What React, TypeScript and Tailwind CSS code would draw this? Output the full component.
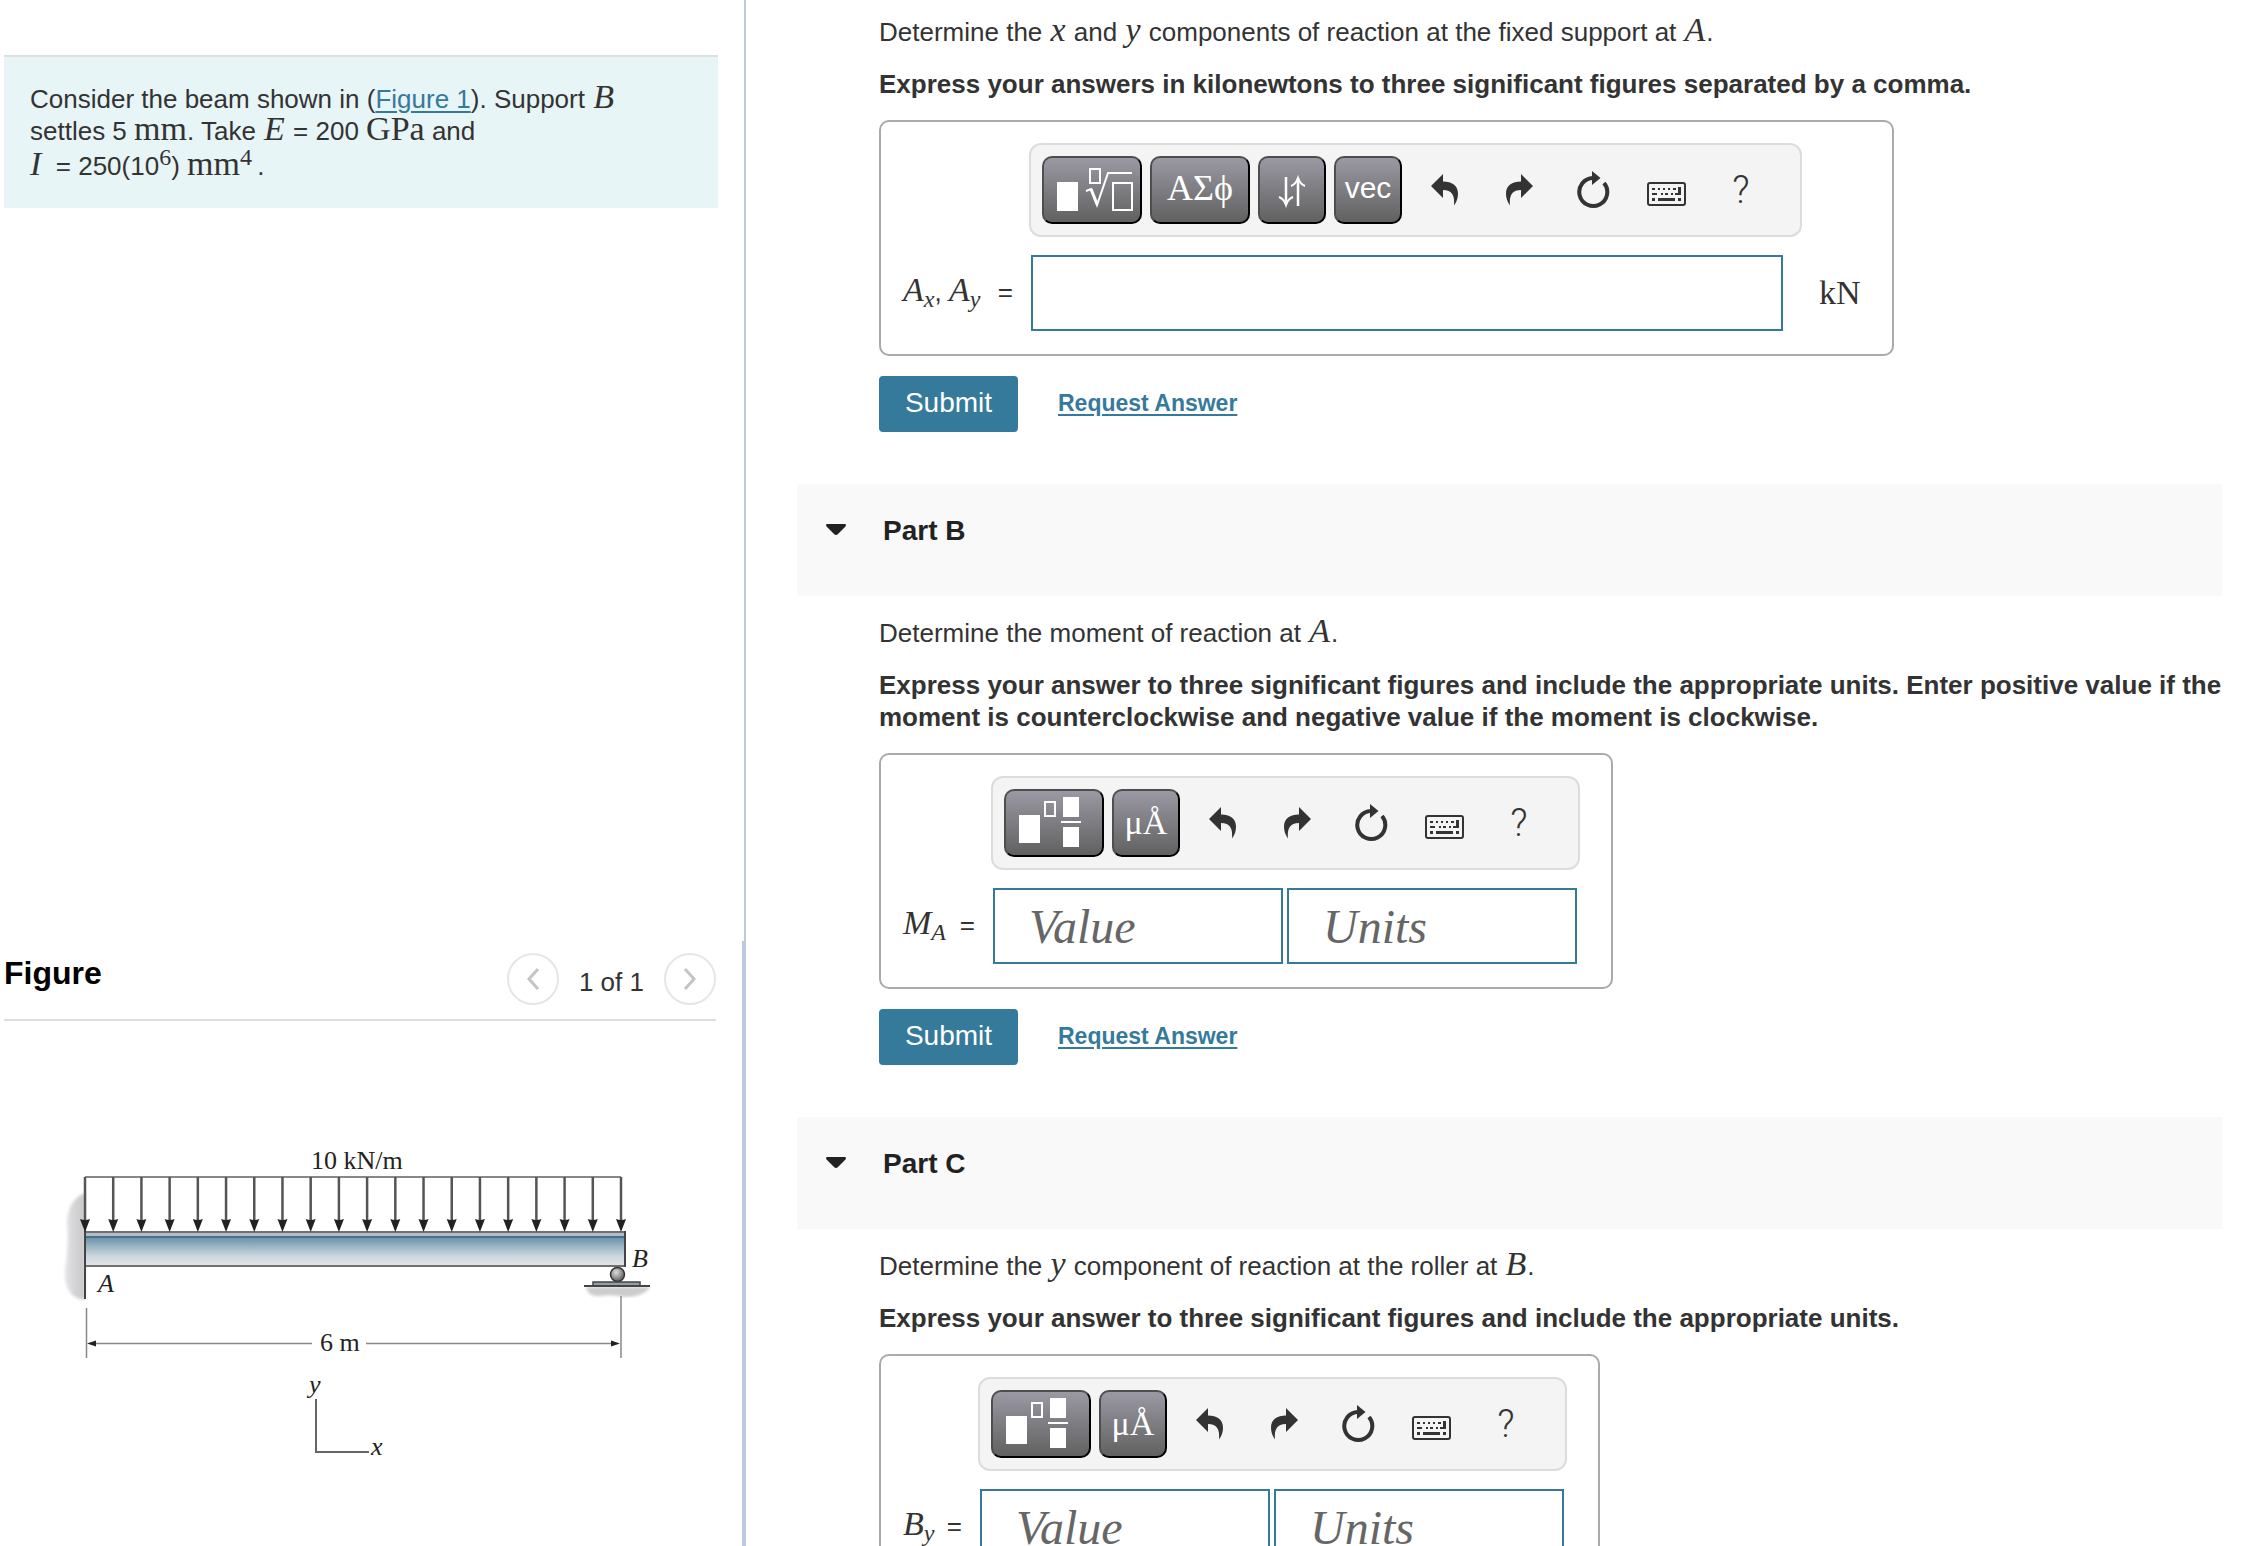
import React from "react";

const MATH = "font-['Liberation_Serif',serif] text-[34px] leading-[0px]";

const V = ({ children }: { children: React.ReactNode }) => (
  <i className={`${MATH} mx-[1px]`}>{children}</i>
);

const Sub = ({ children }: { children: React.ReactNode }) => (
  <sub className="text-[24px] bottom-[-6px]">{children}</sub>
);

const Sup = ({ children }: { children: React.ReactNode }) => (
  <sup className="top-[-10px] align-baseline font-['Liberation_Serif',serif] text-[24px]">{children}</sup>
);

const TemplateRootIcon = () => (
  <svg width="96" height="64" viewBox="2 2 96 64" fill="none" stroke="#fff" strokeWidth="2">
    <rect x="15" y="26" width="21" height="29" fill="#fff" stroke="none" />
    <rect x="48" y="13" width="10" height="14" />
    <path d="M44 35l5-2 6 16 11-32h24" />
    <path d="M49 33l6 15" strokeWidth="3" />
    <rect x="71" y="27" width="19" height="27" />
  </svg>
);

const TemplateFractionIcon = () => (
  <svg width="96" height="64" viewBox="2 2 96 64" fill="#fff">
    <rect x="15" y="26" width="21" height="28" />
    <rect x="41" y="13" width="10" height="14" fill="none" stroke="#fff" strokeWidth="2" />
    <rect x="59" y="8" width="16" height="20" />
    <rect x="57" y="32" width="20" height="2" />
    <rect x="59" y="38" width="16" height="20" />
  </svg>
);

const UpDownIcon = () => (
  <svg width="64" height="64" viewBox="2 2 64 64" fill="none" stroke="#fff" strokeWidth="2">
    <path d="M28 21v27M40 50V22" strokeWidth="2.500" />
    <path d="M21 41q5 2 7 8q2-6 7-8M33 30q5-2 7-8q2 6 7 8" />
  </svg>
);

const UndoIcon = () => (
  <svg width="28" height="32" viewBox="0 0 28 32" fill="#333">
    <path d="M0 12L12 0v7.500c9 0 15 4 15 12c0 4-1 8-4 12c1-10-2-15.500-11-15.500v8z" />
  </svg>
);

const RedoIcon = () => (
  <svg width="28" height="32" viewBox="0 0 28 32" fill="#333">
    <path d="M28 12L16 0v7.500c-9 0-15 4-15 12c0 4 1 8 4 12c-1-10 2-15.500 11-15.500v8z" />
  </svg>
);

const ResetIcon = () => (
  <svg width="34" height="38" viewBox="0 0 34 38">
    <path d="M17 7A14 14 0 1 0 28 12" fill="none" stroke="#333" strokeWidth="4" />
    <path d="M16 0l8.500 7l-8.500 7z" fill="#333" />
  </svg>
);

const KeyboardIcon = () => (
  <svg width="40" height="26" viewBox="0 0 40 26" fill="#333">
    <rect x="1" y="2" width="37" height="22" rx="2" fill="none" stroke="#333" strokeWidth="2" />
    <path d="M5 7h3v2H5zM11 7h2v2h-2zM16 7h2v2h-2zM21 7h2v2h-2zM26 7h3v2h-3z" />
    <path d="M5 12h5v2H5zM14 12h2v2h-2zM18 12h3v2h-3zM24 12h2v2h-2zM28 12h3V6h3v8h-6z" />
    <path d="M5 17h3v3H5zM11 17h17v3H11zM31 17h3v3h-3z" />
  </svg>
);

const KEY =
  "flex h-[68px] items-center justify-center rounded-[10px] border-2 border-t-[#4e4e4e] border-l-[#4e4e4e] border-r-black border-b-black bg-gradient-to-b from-[#9b99a4] to-[#616161] text-white";
const TOOL = "flex h-[68px] w-[74px] items-center justify-center";

const Tools = () => (
  <div className="-ml-[2px] flex">
    <button aria-label="Undo" className={TOOL}><UndoIcon /></button>
    <button aria-label="Redo" className={TOOL}><RedoIcon /></button>
    <button aria-label="Reset" className={TOOL}><ResetIcon /></button>
    <button aria-label="Keyboard shortcuts" className={`${TOOL} pt-[8px]`}><KeyboardIcon /></button>
    <button aria-label="Help" className={`${TOOL} font-['Roboto',sans-serif] text-[38px] font-light text-[#333]`}>?</button>
  </div>
);

const Toolbar = ({ children }: { children: React.ReactNode }) => (
  <div className="flex w-fit gap-[8px] rounded-[12px] border-2 border-[#dcdcdc] bg-[#f4f4f4] py-[11px] pr-[22px] pl-[11px]">
    {children}
    <Tools />
  </div>
);

const AnswerBox = ({ label, labelClass, inputId, children }: {
  label: React.ReactNode;
  labelClass: string;
  inputId: string;
  children: React.ReactNode;
}) => (
  <div className="flex w-fit items-end rounded-[10px] border-2 border-[#aaa] pt-[21px] pb-[23px] pl-[22px] pr-[31px]">
    <label
      htmlFor={inputId}
      className={`flex h-[76px] items-center justify-between pr-[16px] pb-[2px] whitespace-nowrap ${labelClass}`}
    >
      <span>{label}</span>
      <span>=</span>
    </label>
    <div className="flex flex-col gap-[18px]">{children}</div>
  </div>
);

const FIELD =
  "h-[76px] border-2 border-[#367a9b] bg-white px-[34px] font-['Liberation_Serif',serif] text-[48px] italic text-[#333] placeholder:text-[#666] placeholder:opacity-100 outline-none";

const ValueUnits = ({ id }: { id: string }) => (
  <>
    <Toolbar>
      <button aria-label="Templates" className={`${KEY} w-[100px]`}><TemplateFractionIcon /></button>
      <button aria-label="Units" className={`${KEY} w-[68px] font-['Liberation_Serif',serif] text-[34px]`}>μÅ</button>
    </Toolbar>
    <div className="flex gap-[4px] pl-[2px]">
      <input id={id} placeholder="Value" className={`${FIELD} w-[290px]`} />
      <input aria-label="Units" placeholder="Units" className={`${FIELD} w-[290px]`} />
    </div>
  </>
);

const Actions = () => (
  <div className="flex items-center gap-[40px]">
    <button className="h-[56px] w-[139px] rounded-[4px] bg-[#367a9b] pb-[2px] text-[28px] text-white">Submit</button>
    <a href="#" className="pb-[2px] text-[23px] font-bold text-[#367a9b] underline underline-offset-[3px]">Request Answer</a>
  </div>
);

const PartHeader = ({ title }: { title: string }) => (
  <div className="flex h-[112px] gap-[36px] bg-[#f9f9f9] pt-[29px] pl-[28px]">
    <svg width="22" height="12" viewBox="0 0 22 12" className="mt-[11px]">
      <path d="M2 0h18q2 1 0 3l-7 7q-2 2-4 0L2 3q-2-2 0-3z" fill="#222" />
    </svg>
    <h2 className="text-[28px] leading-[36px] font-bold text-[#222]">{title}</h2>
  </div>
);

const PART_BODY = "flex flex-col gap-[20px] pl-[82px] pb-[52px]";

const arrows = Array.from({ length: 20 }, (_, i) => 45 + (i * 536) / 19);

const BeamFigure = () => (
  <svg
    viewBox="0 0 640 360"
    className="ml-[36px] w-[640px] font-['Liberation_Serif',serif] text-[26px]"
    fill="#222"
  >
    <defs>
      <linearGradient id="web" x1="0" y1="0" x2="0" y2="1">
        <stop offset="0" stopColor="#4f7f9a" />
        <stop offset="0.25" stopColor="#7b9db2" />
        <stop offset="0.7" stopColor="#cbd6de" />
        <stop offset="1" stopColor="#e2e6ea" />
      </linearGradient>
      <linearGradient id="wall" x1="0" y1="0" x2="1" y2="0">
        <stop offset="0" stopColor="#e6e6e8" />
        <stop offset="0.5" stopColor="#d4d4d6" />
        <stop offset="1" stopColor="#c8c8ca" />
      </linearGradient>
      <radialGradient id="ball" cx="0.4" cy="0.35" r="0.7">
        <stop offset="0" stopColor="#ddd" />
        <stop offset="1" stopColor="#555" />
      </radialGradient>
      <filter id="soft"><feGaussianBlur stdDeviation="1.5" /></filter>
    </defs>

    <path d="M45 73q-17 6-18 30q2 20-2 45q-2 30 20 32z" fill="url(#wall)" filter="url(#soft)" />
    <path d="M546 167q2 10 14 9q12-2 24 1q20 0 26-10z" fill="#ccc" filter="url(#soft)" />

    <rect x="45" y="112" width="540" height="34" fill="url(#web)" stroke="#6f7072" strokeWidth="2" />
    <rect x="46" y="113" width="538" height="3" fill="#b4bcc6" />
    <path d="M46 117h538" stroke="#44708a" strokeWidth="2" />
    <path d="M45 57v122" stroke="#444" strokeWidth="2" />
    <path d="M585 111v36" stroke="#444" strokeWidth="2" />

    <path d="M45 57h536" stroke="#888" strokeWidth="2" />
    {arrows.map((x) => (
      <g key={x}>
        <path d={`M${x} 57V102`} stroke="#555" strokeWidth="2.5" />
        <path d={`M${x - 5} 99q5 2 10 0l-5 13z`} />
      </g>
    ))}

    <circle cx="577.5" cy="154.5" r="7" fill="url(#ball)" stroke="#333" strokeWidth="1.5" />
    <rect x="553" y="162" width="47" height="4" fill="#8fa0aa" stroke="#444" strokeWidth="1.5" />
    <path d="M544 166h66" stroke="#444" strokeWidth="2" />

    <g stroke="#888" strokeWidth="1.5">
      <path d="M46.500 188v50M581 176v62" />
      <path d="M50 223.500h222M326 223.500h250" />
    </g>
    <path d="M47 223.500l9-3v6zM580 223.500l-9-3v6z" />
    <path d="M276 279v53h53" fill="none" stroke="#666" strokeWidth="2" />

    <text x="271" y="49">10 kN/m</text>
    <text x="280" y="231">6 m</text>
    <g fontStyle="italic">
      <text x="58" y="172">A</text>
      <text x="592" y="147">B</text>
      <text x="269" y="273">y</text>
      <text x="331" y="335">x</text>
    </g>
  </svg>
);

const PAGER = "flex size-[52px] items-center justify-center rounded-full border-2 border-[#e6e6e6]";

export default function App() {
  return (
    <div className="flex h-screen overflow-hidden bg-white font-['Liberation_Sans',Arial,sans-serif] text-[26px] leading-[32px] text-[#333]">
      <aside className="flex w-[746px] shrink-0 flex-col">
        <div className="flex-1 border-r-2 border-[#bccadf] pt-[55px] pr-[26px] pl-[4px]">
          <div className="border-t-2 border-[#dcdfdf] bg-[#e8f5f7] pt-[26px] pb-[26px] pl-[26px]">
            <p>
              Consider the beam shown in (
              <a href="#figure" className="text-[#367a9b] underline underline-offset-[3px]">Figure 1</a>
              ). Support <V>B</V>
              <br />
              settles 5 <span className={MATH}>mm</span>. Take <V>E</V> = 200 <span className={MATH}>GPa</span> and
            </p>
            <p className="pt-[3px]">
              <i className={MATH}>I</i>&nbsp; = 250(10<Sup>6</Sup>) <span className={MATH}>mm</span><Sup>4</Sup>&thinsp;.
            </p>
          </div>
        </div>
        <div id="figure" className="h-[605px] border-r-4 border-[#bccadf] pr-[26px] pl-[4px]">
          <div className="flex h-[80px] justify-between border-b-2 border-[#dedede] pt-[12px]">
            <h2 className="text-[32px] leading-[40px] font-bold text-black">Figure</h2>
            <div className="flex items-start gap-[20px]">
              <button aria-label="Previous" className={PAGER}>
                <svg width="14" height="24" viewBox="0 0 14 24" fill="none" stroke="#c4c4c4" strokeWidth="3">
                  <path d="M12 2L3 12l9 10" />
                </svg>
              </button>
              <span className="pt-[13px]">1 of 1</span>
              <button aria-label="Next" className={PAGER}>
                <svg width="14" height="24" viewBox="0 0 14 24" fill="none" stroke="#c4c4c4" strokeWidth="3">
                  <path d="M2 2l9 10l-9 10" />
                </svg>
              </button>
            </div>
          </div>
          <div className="pt-[99px]">
            <BeamFigure />
          </div>
        </div>
      </aside>

      <main className="flex-1 pr-[26px] pl-[51px]">
        <section className={`${PART_BODY} pt-[16px]`}>
          <p>
            Determine the <V>x</V> and <V>y</V> components of reaction at the fixed support at <V>A</V>.
          </p>
          <p className="font-bold">
            Express your answers in kilonewtons to three significant figures separated by a comma.
          </p>
          <AnswerBox
            inputId="part-a"
            labelClass="w-[126px]"
            label={<><i className={MATH}>A<Sub>x</Sub></i>, <i className={MATH}>A<Sub>y</Sub></i></>}
          >
            <Toolbar>
              <button aria-label="Templates" className={`${KEY} w-[100px]`}><TemplateRootIcon /></button>
              <button className={`${KEY} w-[100px] pb-[4px] font-['Liberation_Serif',serif] text-[36px]`}>ΑΣϕ</button>
              <button aria-label="Arrows" className={`${KEY} w-[68px]`}><UpDownIcon /></button>
              <button className={`${KEY} w-[68px] pb-[4px] text-[30px]`}>vec</button>
            </Toolbar>
            <div className="flex items-center gap-[36px] pl-[2px]">
              <input id="part-a" className={`${FIELD} w-[752px]`} />
              <span className={MATH}>kN</span>
            </div>
          </AnswerBox>
          <Actions />
        </section>

        <PartHeader title="Part B" />
        <section className={`${PART_BODY} pt-[21px]`}>
          <p>
            Determine the moment of reaction at <V>A</V>.
          </p>
          <p className="-mr-[20px] font-bold">
            Express your answer to three significant figures and include the appropriate units. Enter positive value if the
            moment is counterclockwise and negative value if the moment is clockwise.
          </p>
          <AnswerBox inputId="part-b" labelClass="w-[88px]" label={<i className={MATH}>M<Sub>A</Sub></i>}>
            <ValueUnits id="part-b" />
          </AnswerBox>
          <Actions />
        </section>

        <PartHeader title="Part C" />
        <section className={`${PART_BODY} pt-[21px]`}>
          <p>
            Determine the <V>y</V> component of reaction at the roller at <V>B</V>.
          </p>
          <p className="font-bold">
            Express your answer to three significant figures and include the appropriate units.
          </p>
          <AnswerBox inputId="part-c" labelClass="w-[75px]" label={<i className={MATH}>B<Sub>y</Sub></i>}>
            <ValueUnits id="part-c" />
          </AnswerBox>
          <Actions />
        </section>
      </main>
    </div>
  );
}
